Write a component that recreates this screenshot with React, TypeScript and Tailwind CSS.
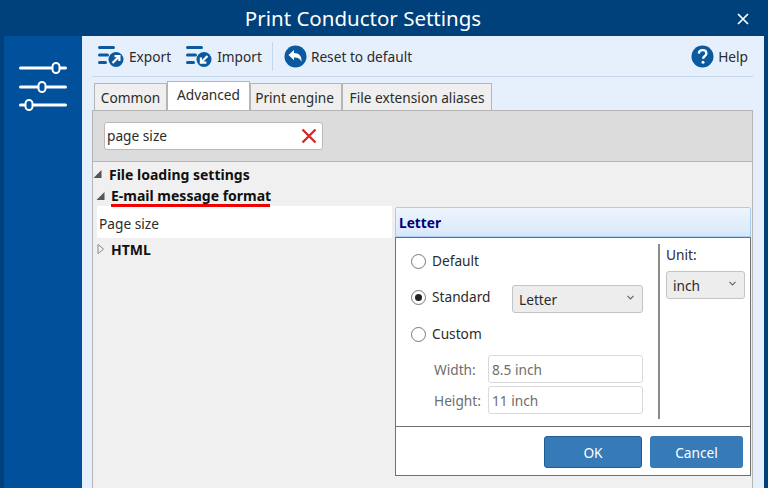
import React from 'react';

const font = "font-['Noto_Sans',sans-serif]";

const ListIcon: React.FC<{ kind: 'export' | 'import' }> = ({ kind }) => (
  <svg width="28" height="24" viewBox="0 0 28 24" className="shrink-0">
    <rect x="2" y="2" width="17" height="3" rx="1.5" fill="#0b5aa0" />
    <rect x="2" y="9.5" width="11" height="3" rx="1.5" fill="#0b5aa0" />
    <rect x="2" y="17" width="9" height="3" rx="1.5" fill="#0b5aa0" />
    <circle cx="20" cy="15.5" r="7.5" fill="#0b5aa0" />
    {kind === 'export' ? (
      <path d="M16.5 19 L22 13.5 M18.5 12.2 H23.4 V17.1" stroke="#fff" strokeWidth="2.2" fill="none" />
    ) : (
      <path d="M23.5 12 L18 17.5 M22.4 18.6 H16.9 V13.4" stroke="#fff" strokeWidth="2.2" fill="none" />
    )}
  </svg>
);

const Slider: React.FC<{ pos: number }> = ({ pos }) => (
  <g>
    <rect x="0" y="-1.5" width="48" height="3" rx="1.5" fill="#fff" />
    <rect x={pos - 3.5} y="-5" width="7" height="10" rx="3.5" fill="#00509b" stroke="#fff" strokeWidth="2" />
  </g>
);

const TreeArrow: React.FC<{ open?: boolean }> = ({ open }) => (
  <svg width="9" height="10" viewBox="0 0 9 10" className="shrink-0">
    {open ? <path d="M0.5 9 H8.5 V1 Z" fill="#555" /> : <path d="M1 0.5 L6.5 5 L1 9.5 Z" fill="#f4f4f4" stroke="#888" />}
  </svg>
);

const Radio: React.FC<{ label: string; checked?: boolean }> = ({ label, checked }) => (
  <div className="flex items-center gap-[6px]">
    <span className="w-[15px] h-[15px] rounded-full border border-[#777] bg-white flex items-center justify-center shrink-0">
      {checked && <span className="w-[7px] h-[7px] rounded-full bg-[#222]" />}
    </span>
    <span className="text-[13.7px] leading-[20px] text-[#2b2b2b]">{label}</span>
  </div>
);

const Chevron = () => (
  <svg width="7" height="5" viewBox="0 0 7 5" className="shrink-0 mb-[6px]">
    <path d="M0.5 0.8 L3.5 3.8 L6.5 0.8" stroke="#666" strokeWidth="1.2" fill="none" />
  </svg>
);

const Select: React.FC<{ label: string; className: string }> = ({ label, className }) => (
  <div className={`h-[28px] flex items-center justify-between pl-[6px] pr-[8px] pt-[2px] rounded-[3px] border border-[#c4c4c4] bg-[#ededed] text-[13.7px] text-[#2b2b2b] ${className}`}>
    <span>{label}</span>
    <Chevron />
  </div>
);

const SizeInput: React.FC<{ label: string; value: string }> = ({ label, value }) => (
  <div className="flex items-center">
    <span className="w-[54px] pt-[2px] text-[13.7px] text-[#6e6e6e]">{label}</span>
    <div className="w-[155px] h-[28px] flex items-center pl-[3px] pt-[2px] rounded-[3px] border border-[#d9d9d9] bg-white text-[13.7px] text-[#6e6e6e]">{value}</div>
  </div>
);

const Tab: React.FC<{ label: string; active?: boolean; className: string }> = ({ label, active, className }) => (
  <div
    className={`flex items-center justify-center border border-b-0 border-[#b5b5b5] text-[13.7px] ${
      active ? 'h-[29px] bg-white -mt-[1px] pb-[1px]' : 'h-[27px] pt-[2px] bg-[#efefef]'
    } text-[#2b2b2b] ${className}`}
  >
    {label}
  </div>
);

export default function App() {
  return (
    <div className={`w-[768px] h-[488px] overflow-hidden bg-[#00417b] flex flex-col ${font}`}>
      <header className="h-[36px] shrink-0 flex items-center">
        <div className="flex-1 text-center text-white text-[20.5px] leading-[36px] pr-[11px]">Print Conductor Settings</div>
        <svg width="12" height="12" viewBox="0 0 12 12" className="mr-[19px] mt-[1px]">
          <path d="M1 1 L11 11 M11 1 L1 11" stroke="#fff" strokeWidth="1.7" />
        </svg>
      </header>
      <div className="flex-1 flex pl-1 pr-1 min-h-0">
        <aside className="w-[78px] shrink-0 bg-[#00509b] pt-[26px] pl-[14px]">
          <svg width="50" height="50" viewBox="0 0 50 50" fill="none">
            <g transform="translate(1,6)"><Slider pos={37} /></g>
            <g transform="translate(1,25)"><Slider pos={23} /></g>
            <g transform="translate(1,43)"><Slider pos={10} /></g>
          </svg>
        </aside>
        <main className="flex-1 bg-[#e6f0fd] pl-[10px] pr-[11px] flex flex-col min-w-0">
          <div className="h-[41px] shrink-0 flex items-center border-b border-[#c5d5ec] text-[13.7px] text-[#2b2b2b]">
            <div className="flex items-center gap-[5px] ml-[4px]">
              <ListIcon kind="export" />
              <span className="pt-[2px]">Export</span>
            </div>
            <div className="flex items-center gap-[5px] ml-[13px]">
              <ListIcon kind="import" />
              <span className="pt-[2px]">Import</span>
            </div>
            <div className="w-px h-[29px] bg-[#c5d5ec] ml-[10px]" />
            <div className="flex items-center gap-[4px] ml-[11px]">
              <svg width="23" height="23" viewBox="0 0 23 23">
                <circle cx="11.5" cy="11.5" r="11" fill="#0b5aa0" />
                <path d="M4.5 10 L10 5 V8 C15 8 18 11 17.5 17 C16 13.5 14 12.5 10 12.5 V15.2 Z" fill="#fff" />
              </svg>
              <span className="pt-[2px]">Reset to default</span>
            </div>
            <div className="flex items-center gap-[4px] ml-auto mr-[5px]">
              <svg width="23" height="23" viewBox="0 0 23 23">
                <circle cx="11.5" cy="11.5" r="11" fill="#0b5aa0" />
                <path d="M7.8 8.6 C7.9 6.4 9.5 5.2 11.6 5.2 C13.8 5.2 15.4 6.5 15.4 8.4 C15.4 11 12.1 11 12.1 13.8" stroke="#fff" strokeWidth="2.3" fill="none" />
                <circle cx="12" cy="17.2" r="1.5" fill="#fff" />
              </svg>
              <span className="pt-[2px]">Help</span>
            </div>
          </div>
          <div className="h-[33px] shrink-0 flex items-end pl-[2px]">
            <Tab label="Common" className="w-[73px]" />
            <Tab label="Advanced" active className="w-[83px]" />
            <Tab label="Print engine" className="w-[92px] pr-[3px]" />
            <Tab label="File extension aliases" className="w-[150px]" />
          </div>
          <section className="flex-1 border border-[#b5b5b5] border-b-0 bg-[#f0f0f0] min-h-0">
            <div className="h-[51px] bg-[#dcdcdc] border-b border-[#b5b5b5] pt-[11px] pl-[11px]">
              <div className="w-[219px] h-[28px] flex items-center justify-between pl-[2px] pr-[5px] rounded-[3px] border border-[#b9b9b9] bg-white text-[13.7px] text-[#2b2b2b]">
                <span className="pt-px">page size</span>
                <svg width="16" height="16" viewBox="0 0 16 16">
                  <path d="M1.5 1.5 L14.5 14.5 M14.5 1.5 L1.5 14.5" stroke="#d42a2a" strokeWidth="2.4" />
                </svg>
              </div>
            </div>
            <div className="flex items-center gap-[6px] h-[22px] mt-[1px] text-[14px] font-bold text-[#111]">
              <TreeArrow open />
              <span className="ml-[1px]">File loading settings</span>
            </div>
            <div className="flex items-center h-[21px] pl-[3px] gap-[6px] text-[14px] font-bold text-[#111] relative">
              <TreeArrow open />
              <span>E-mail message format</span>
              <div className="absolute left-[18px] top-[19px] w-[159px] h-[3px] bg-[#f00000]" />
            </div>
            <div className="grid grid-cols-[298px_1fr] pl-[4px]">
              <div>
                <div className="h-[32px] bg-white w-[295px] flex items-center pl-[2px] pt-[4px] text-[13.7px] text-[#2b2b2b]">Page size</div>
                <div className="h-[22px] flex items-center gap-[5px] text-[14px] font-bold text-[#111]">
                  <TreeArrow />
                  <span>HTML</span>
                </div>
              </div>
              <div className="mr-[1px]">
                <div className="h-[30px] mt-[1px] pt-[2px] rounded-t-[2px] border border-[#a9cdf0] bg-[linear-gradient(#eef5fd,#d8e8f9)] flex items-center pl-[3px] text-[13.7px] font-bold text-[#00007f]">
                  Letter
                </div>
                <div className="h-[239px] border border-[#707070] bg-white flex flex-col">
                  <div className="h-[189px] flex border-b border-[#707070] shrink-0">
                    <div className="w-[262px] pl-[15px] pt-[13px] flex flex-col">
                      <Radio label="Default" />
                      <div className="flex items-center mt-[12px]">
                        <div className="w-[101px] -mt-[2px]"><Radio label="Standard" checked /></div>
                        <Select label="Letter" className="w-[131px] mt-[2px]" />
                      </div>
                      <div className="mt-[11px]"><Radio label="Custom" /></div>
                      <div className="mt-[11px] ml-[23px] flex flex-col gap-[3px]">
                        <SizeInput label="Width:" value="8.5 inch" />
                        <SizeInput label="Height:" value="11 inch" />
                      </div>
                    </div>
                    <div className="w-[2px] h-[175px] mt-[6px] bg-[#8b8b8b]" />
                    <div className="pl-[6px] pt-[7px]">
                      <div className="text-[13.7px] leading-[20px] text-[#2b2b2b]">Unit:</div>
                      <Select label="inch" className="w-[79px] mt-[6px]" />
                    </div>
                  </div>
                  <div className="flex justify-end gap-[8px] pt-[9px] pr-[7px] text-[13.7px] text-white">
                    <div className="w-[98px] h-[32px] pt-[2px] rounded-[3px] border border-[#1e5d94] bg-[#377ab8] flex items-center justify-center">OK</div>
                    <div className="w-[93px] h-[32px] pt-[2px] rounded-[3px] bg-[#377ab8] flex items-center justify-center">Cancel</div>
                  </div>
                </div>
              </div>
            </div>
          </section>
        </main>
      </div>
    </div>
  );
}
